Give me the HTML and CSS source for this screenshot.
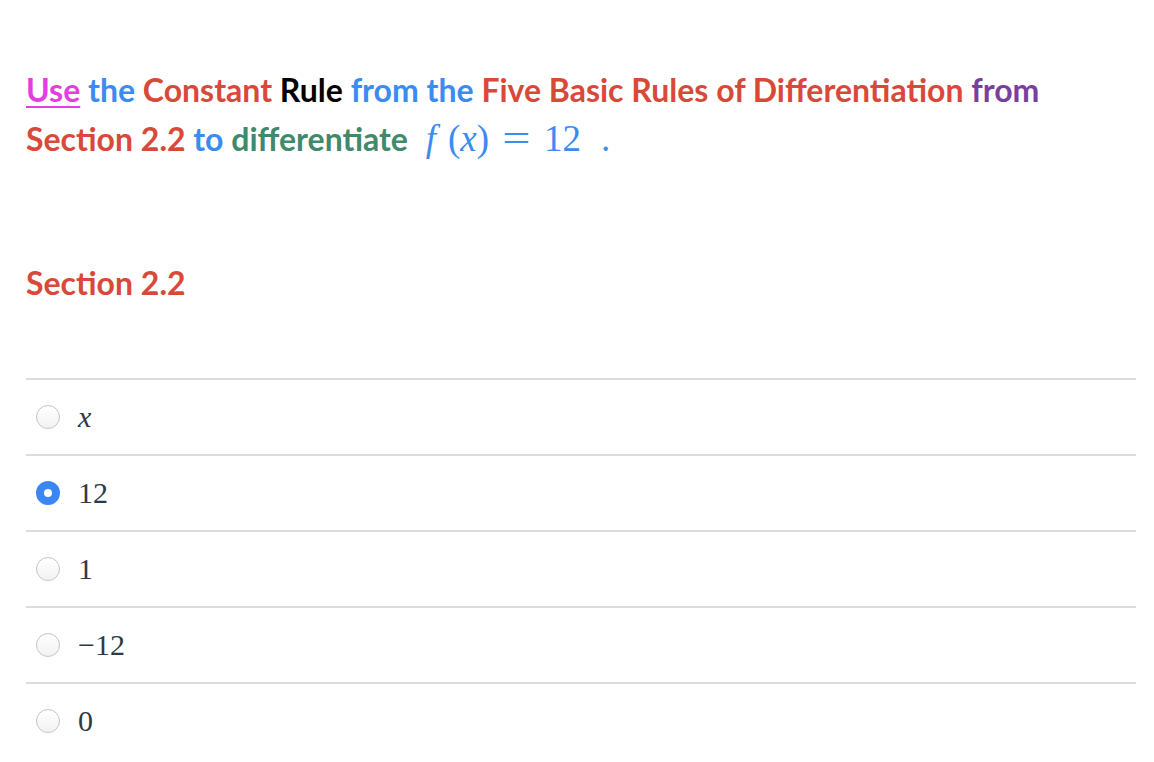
FILE: index.html
```html
<!DOCTYPE html>
<html>
<head>
<meta charset="utf-8">
<link rel="stylesheet" href="styles.css">
</head>
<body>
<div class="page">
  <p class="question">
    <span class="c-pink u">Use</span> <span class="c-blue">the</span> <span class="c-red">Constant</span> <span class="c-black">Rule</span> <span class="c-blue">from the</span> <span class="c-red">Five Basic Rules of Differentiation</span> <span class="c-purple">from</span>
    <span class="c-red">Section 2.2</span> <span class="c-blue">to</span> <span class="c-green">differentiate</span> <span class="math"><i class="mf">f</i><span class="mp">(<i>x</i>)</span><span class="meq">=</span><span class="mn">12</span><span class="mdot">.</span></span>
  </p>
  <p class="section c-red">Section 2.2</p>
  <ul class="options">
    <li class="opt"><span class="radio"></span><span class="label"><i>x</i></span></li>
    <li class="opt"><span class="radio checked"></span><span class="label">12</span></li>
    <li class="opt"><span class="radio"></span><span class="label">1</span></li>
    <li class="opt"><span class="radio"></span><span class="label">&minus;12</span></li>
    <li class="opt"><span class="radio"></span><span class="label">0</span></li>
  </ul>
</div>
</body>
</html>
```
FILE: styles.css
```css
html, body {
  margin: 0;
  padding: 0;
  background: #ffffff;
}
.page {
  padding: 65px 18px 0 26px;
  font-family: Lato, "Open Sans", sans-serif;
}
.question {
  margin: 0;
  font-weight: 700;
  font-size: 32px;
  line-height: 49px;
  width: 1040px;
}
.section {
  margin: 95px 0 0 0;
  font-weight: 700;
  font-size: 32px;
  line-height: 49px;
}
.c-pink { color: #e33fe0; }
.c-blue { color: #3a8cf0; }
.c-red { color: #d8493a; }
.c-black { color: #000000; }
.c-purple { color: #7a3f9e; }
.c-green { color: #3f8a6d; }
.u {
  text-decoration: underline;
  text-decoration-thickness: 2px;
  text-underline-offset: 4px;
}
.math {
  font-family: "Liberation Serif", "Times New Roman", serif;
  font-weight: 400;
  font-size: 37px;
  line-height: 40px;
  color: #3a8cf0;
  margin-left: 10px;
}
.math i { font-style: italic; }
.mp { margin-left: 12px; }
.meq {
  display: inline-block;
  margin-left: 17px;
  transform: scaleX(1.35);
}
.mn { margin-left: 17px; }
.mdot { margin-left: 20px; }
.options {
  list-style: none;
  margin: 71px 0 0 0;
  padding: 0;
  width: 1110px;
}
.opt {
  display: flex;
  align-items: center;
  height: 74px;
  border-top: 2px solid #dcdcdc;
  padding-left: 10px;
}
.radio {
  width: 24px;
  height: 24px;
  box-sizing: border-box;
  border-radius: 50%;
  border: 1px solid #c4c4c4;
  background: linear-gradient(#ffffff, #f2f2f2);
  flex: none;
}
.radio.checked {
  border: 8px solid #3a86f2;
  background: #ffffff;
}
.label {
  margin-left: 18px;
  font-family: "Liberation Serif", "Times New Roman", serif;
  font-size: 30px;
  color: #2d3b45;
}
.label i { font-style: italic; }
```
